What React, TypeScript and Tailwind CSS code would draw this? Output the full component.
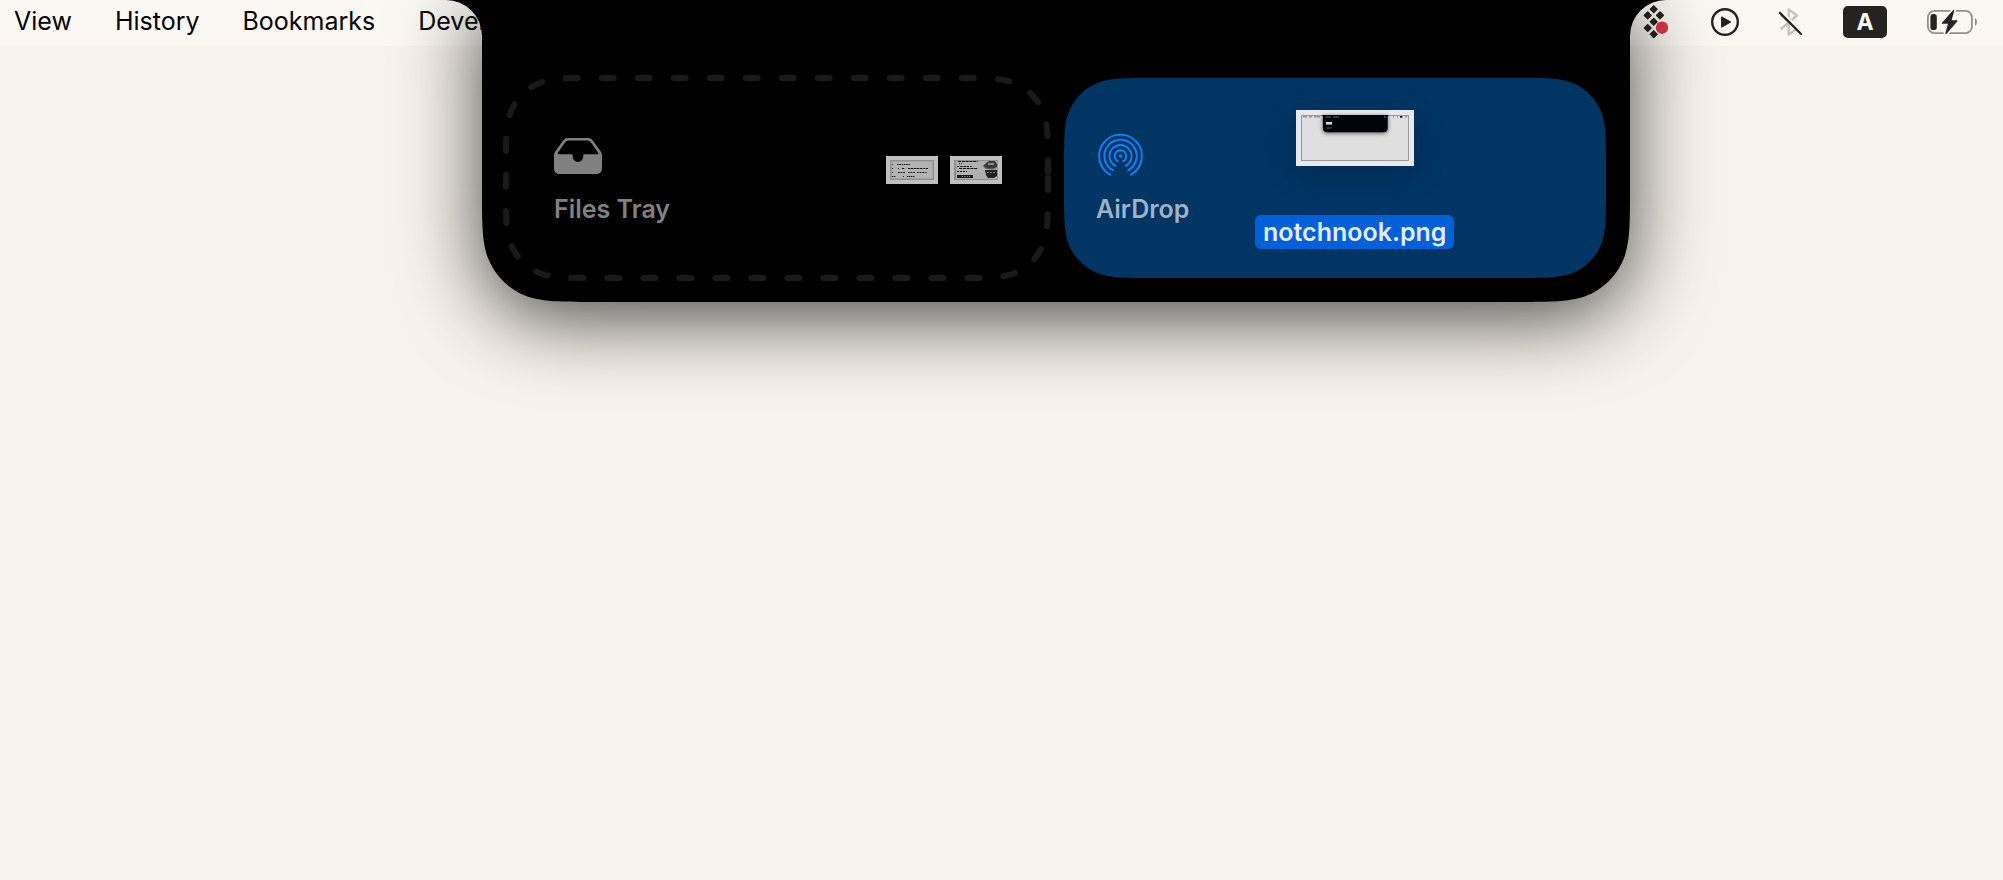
import { useLayoutEffect, useRef, useState } from 'react';
import type { ReactNode } from 'react';

const menuItems = ['View', 'History', 'Bookmarks', 'Develop'];

const EAR = 36;

type Size = { width: number; height: number };

const useSize = () => {
    const ref = useRef<HTMLDivElement>(null);
    const [size, setSize] = useState<Size>({ width: 0, height: 0 });

    useLayoutEffect(() => {
        const el = ref.current;
        if (!el) return;
        const update = () => setSize({ width: el.offsetWidth, height: el.offsetHeight });
        update();
        const observer = new ResizeObserver(update);
        observer.observe(el);
        return () => observer.disconnect();
    }, []);

    return { ref, size };
};

// Quarter of a continuous ("squircle") corner. (cx, cy) is the sharp corner,
// (ax, ay) points back along the incoming edge, (bx, by) along the outgoing one.
const corner = (cx: number, cy: number, r: number, ax: number, ay: number, bx: number, by: number) => {
    const p = (a: number, b: number) => `${cx + r * (a * ax + b * bx)} ${cy + r * (a * ay + b * by)}`;
    return [
        `L ${p(1.5287, 0)}`,
        `C ${p(1.0885, 0)} ${p(0.8684, 0)} ${p(0.6315, 0.0749)}`,
        `C ${p(0.3728, 0.1691)} ${p(0.1691, 0.3728)} ${p(0.0749, 0.6315)}`,
        `C ${p(0, 0.8684)} ${p(0, 1.0885)} ${p(0, 1.5287)}`,
    ].join(' ');
};

// Starts at the middle of the right edge and runs clockwise
const squirclePath = ({ width: w, height: h }: Size, r: number) =>
    [
        `M ${w} ${h / 2}`,
        corner(w, h, r, 0, -1, -1, 0),
        corner(0, h, r, 1, 0, 0, -1),
        corner(0, 0, r, 0, 1, 1, 0),
        corner(w, 0, r, -1, 0, 0, 1),
        'Z',
    ].join(' ');

const notchPath = ({ width: w, height: h }: Size, r: number) =>
    [
        `M ${-EAR} 0`,
        `H ${w + EAR}`,
        `A ${EAR} ${EAR} 0 0 0 ${w} ${EAR}`,
        corner(w, h, r, 0, -1, -1, 0),
        corner(0, h, r, 1, 0, 0, -1),
        `L 0 ${EAR}`,
        `A ${EAR} ${EAR} 0 0 0 ${-EAR} 0`,
        'Z',
    ].join(' ');

const DiamondsIcon = () => (
    <svg width="28" height="36" viewBox="0 0 28 36" fill="#242321">
        {[[10.7, 5.2], [4.7, 11.4], [17, 11.4], [10.7, 17.7], [4.7, 24], [10.7, 30.2]].map(([x, y]) => (
            <rect key={`${x}-${y}`} x={x - 3.1} y={y - 3.1} width="6.2" height="6.2" rx="0.8" transform={`rotate(45 ${x} ${y})`} />
        ))}
        <circle cx="19" cy="23.7" r="6.2" fill="#e0364a" />
    </svg>
);

const PlayIcon = () => (
    <svg width="28" height="28" viewBox="0 0 28 28" fill="none">
        <circle cx="14" cy="14" r="12.8" stroke="#242321" strokeWidth="2.4" />
        <path d="M10.7 9 L19.5 14 L10.7 19 Z" fill="#242321" stroke="#242321" strokeWidth="1.2" strokeLinejoin="round" />
    </svg>
);

const BluetoothOffIcon = () => (
    <svg width="24" height="30" viewBox="0 0 24 30" fill="none">
        <path d="M2.4 8.5 L18 21.5 L9.7 27.5 V2.5 L18 8.5 L2.4 21.5" stroke="#c6c3be" strokeWidth="2.4" strokeLinejoin="round" strokeLinecap="round" />
        <path d="M2.6 4.2 L24 25.8" stroke="#fbf8f3" strokeWidth="2" />
        <path d="M0.9 5.9 L22 27" stroke="#242321" strokeWidth="2.2" strokeLinecap="round" />
    </svg>
);

const BatteryIcon = () => (
    <svg width="50" height="26" viewBox="0 0 50 26" fill="none">
        <rect x="0.9" y="1.9" width="44" height="22.2" rx="6.5" stroke="#93908c" strokeWidth="1.8" />
        <path d="M48 9 C50.6 10.2 50.6 15.8 48 17 Z" fill="#93908c" />
        <rect x="3.4" y="5" width="6.4" height="16" rx="2.8" fill="#242321" />
        <path
            d="M26 1.2 L15 13.8 Q14.4 14.8 15.6 14.8 H21 L18.3 24.4 Q18.4 25.6 19.6 24.8 L30.4 12.2 Q31 11.2 29.8 11.2 H24.6 L27.3 1.8 Q27.2 0.4 26 1.2 Z"
            fill="#242321"
            stroke="#fbf8f3"
            strokeWidth="3.4"
            paintOrder="stroke"
        />
    </svg>
);

const TrayIcon = () => (
    <svg width="48" height="36" viewBox="0 0 48 36" fill="#808080">
        <path
            fillRule="evenodd"
            d="M14 0 H34 Q37 0 38.8 2.4 L46.6 13.2 Q48 15 48 17.4 V30 Q48 36 42 36 H6 Q0 36 0 30 V17.4 Q0 15 1.4 13.2 L9.2 2.4 Q11 0 14 0 Z M14.2 2.6 Q12.4 2.6 11.3 4.1 L4 14.6 Q3.2 16.2 4.6 16.2 H17.4 Q18.8 16.2 18.8 17.6 V18.6 C18.8 25.8 29.2 25.8 29.2 18.6 V17.6 Q29.2 16.2 30.6 16.2 H43.4 Q44.8 16.2 44 14.6 L36.7 4.1 Q35.6 2.6 33.8 2.6 Z"
        />
    </svg>
);

const AirDropIcon = () => (
    <svg className="overflow-visible" width="48" height="48" viewBox="0 0 48 48" fill="none" stroke="#0a84ff" strokeWidth="1.9" strokeLinecap="round">
        {[21.4, 16.2, 11, 5.8].map((r) => {
            const dx = r * 0.48;
            const dy = r * 0.877;
            return <path key={r} d={`M ${24.5 - dx} ${24 + dy} A ${r} ${r} 0 1 1 ${24.5 + dx} ${24 + dy}`} />;
        })}
        <circle cx="24.5" cy="24" r="1.8" fill="#0a84ff" stroke="none" />
    </svg>
);

const TextThumb = () => (
    <svg width="52" height="28" viewBox="0 0 52 28">
        <rect width="52" height="28" fill="#bfbfbf" />
        <rect x="4" y="4" width="44" height="20" fill="#8f8f8f" />
        <rect x="5" y="5" width="42" height="18" fill="#a4a4a4" />
        <rect x="6" y="6" width="40" height="16" fill="#b4b4b4" />
        <g stroke="#111" strokeWidth="1">
            <path d="M6 8.5 H7 M11 8.5 H24" strokeDasharray="1.6 0.7" />
            <path d="M6 12.5 H7 M12 12.5 H13 M16 12.5 H19 M22 12.5 H42" strokeDasharray="2.4 0.6" />
            <path d="M6 16.5 H7 M12 16.5 H19 M22 16.5 H29 M31 16.5 H41" strokeDasharray="1.8 0.8" />
            <path d="M6 20.5 H10 M17 20.5 H18 M21 20.5 H29" strokeDasharray="1.4 0.6" />
        </g>
    </svg>
);

const RobotThumb = () => (
    <svg width="52" height="28" viewBox="0 0 52 28">
        <rect width="52" height="28" fill="#bfbfbf" />
        <rect x="4" y="4" width="44" height="20" fill="#8f8f8f" />
        <rect x="6" y="5" width="41" height="18" fill="#b0b0b0" />
        <g stroke="#111" strokeWidth="1">
            <path d="M8 5.5 H28" strokeDasharray="3 0.8" />
            <path d="M9 7.5 H12" strokeDasharray="1 1" />
            <path d="M7 10.5 H22" strokeDasharray="2.4 0.8" />
            <path d="M9 12.5 H28" strokeDasharray="3 0.8" />
            <path d="M7 15.5 H17" strokeDasharray="2 1" />
        </g>
        <rect x="7" y="19" width="16" height="3" fill="#1c1c1c" />
        <path d="M12 20.5 H21" stroke="#999" strokeWidth="1" strokeDasharray="1 1.4" />
        <path d="M36 7 L39 5 H45 L47 8 V11 L43 13 H36 L33 10 Z" fill="#3a3a3a" />
        <path d="M38 7 H44 V9 H38 Z" fill="#8a8a8a" />
        <path d="M34 11 L38 13 H46" stroke="#777" fill="none" />
        <path d="M35 14 H47 V20 L44 22 H38 L36 19 Z" fill="#222" />
        <path d="M37 16.5 H45" stroke="#777" strokeDasharray="2 1" />
    </svg>
);

const ScreenshotThumb = () => (
    <svg className="shadow-[0_8px_32px_rgba(0,0,0,0.2)]" width="118" height="56" viewBox="0 0 118 56">
        <rect width="118" height="56" fill="#e6eaf0" />
        <rect x="5.5" y="5.5" width="107" height="45" fill="#dfdfdf" stroke="#97999c" />
        <path d="M7 6.8 H11 M13 6.8 H16 M18 6.8 H24 M97 6.8 H98 M101 6.8 H102 M109 6.8 H111" stroke="#888" strokeWidth="1.2" />
        <rect x="104" y="6" width="2.4" height="1.8" fill="#222" />
        <path
            className="drop-shadow-[0_1px_2px_rgba(0,0,0,0.6)]"
            d="M25.5 5 H93 Q91.7 5.4 91.7 7 V18 Q91.7 22.3 87.4 22.3 H31.2 Q26.9 22.3 26.9 18 V7 Q26.9 5.4 25.5 5 Z"
            fill="#01040a"
        />
        <path d="M29.5 7 H35 M37 7 H43 M88 7 H90" stroke="#666b72" strokeWidth="1.2" />
        <rect x="30" y="12" width="6" height="2.6" fill="#d5d9df" />
        <path d="M30.5 18 H35.5" stroke="#555b62" strokeWidth="1" />
    </svg>
);

const MenuBar = () => (
    <header className="flex h-[46px] items-center justify-between bg-[#fbf8f3] pr-[26px] pb-[2px] pl-[14px]">
        <nav className="flex items-center gap-[43px] pb-[2px]">
            {menuItems.map((item) => (
                <button key={item} className="text-[25px] leading-8 text-black">
                    {item}
                </button>
            ))}
        </nav>
        <div className="flex items-center gap-10">
            <button aria-label="Workspaces"><DiamondsIcon /></button>
            <button aria-label="Now Playing"><PlayIcon /></button>
            <button aria-label="Bluetooth"><BluetoothOffIcon /></button>
            <button className="flex h-8 w-11 items-center justify-center rounded-[5px] bg-[#242321] text-[23px] leading-8 font-bold text-[#fbf8f3]">
                A
            </button>
            <button aria-label="Battery"><BatteryIcon /></button>
        </div>
    </header>
);

type DropZoneProps = {
    dashed?: boolean;
    className: string;
    children: ReactNode;
};

const DropZone = ({ dashed, className, children }: DropZoneProps) => {
    const { ref, size } = useSize();
    return (
        <div ref={ref} className={`relative flex h-[200px] items-center justify-between ${className}`}>
            <svg className="absolute inset-0 h-full w-full overflow-visible">
                {size.width > 0 && (
                    <path
                        d={squirclePath(size, 56)}
                        fill={dashed ? 'none' : '#003564'}
                        stroke={dashed ? '#1a1a1a' : 'none'}
                        strokeWidth="6"
                        strokeLinecap="round"
                        strokeDasharray="12 24"
                    />
                )}
            </svg>
            {children}
        </div>
    );
};

const Notch = () => {
    const { ref, size } = useSize();
    return (
        <main ref={ref} className="absolute top-0 right-[373px] left-[482px] px-6 pt-[78px] pb-6">
            <svg className="absolute inset-0 h-full w-full overflow-visible drop-shadow-[0_16px_40px_rgba(0,0,0,0.7)]">
                {size.width > 0 && <path d={notchPath(size, 72)} fill="#000" />}
            </svg>
            <div className="relative grid grid-cols-2 gap-4">
                <DropZone dashed className="pr-[46px] pl-12">
                    <div className="relative flex flex-col gap-[13px] pt-px">
                        <div className="flex h-12 items-center">
                            <TrayIcon />
                        </div>
                        <span className="text-[25px] leading-8 font-semibold text-[#808080]">Files Tray</span>
                    </div>
                    <div className="relative flex gap-3 pb-4">
                        <TextThumb />
                        <RobotThumb />
                    </div>
                </DropZone>

                <DropZone className="px-8">
                    <div className="relative flex flex-col gap-[13px] pt-px">
                        <AirDropIcon />
                        <span className="text-[25px] leading-8 font-semibold text-[#9fb2c6]">AirDrop</span>
                    </div>
                    {/* Dragged file */}
                    <div className="absolute top-8 left-[191px] flex flex-col items-center gap-[49px]">
                        <ScreenshotThumb />
                        <span className="rounded-md bg-[#0060d8] px-2 text-[25px] leading-[34px] font-semibold text-[#e6ebf2]">
                            notchnook.png
                        </span>
                    </div>
                </DropZone>
            </div>
        </main>
    );
};

const App = () => {
    return (
        <div className="relative min-h-screen overflow-hidden bg-[#f7f2eb] font-['Inter','Liberation_Sans',sans-serif]">
            <MenuBar />
            <Notch />
        </div>
    );
};

export default App;
